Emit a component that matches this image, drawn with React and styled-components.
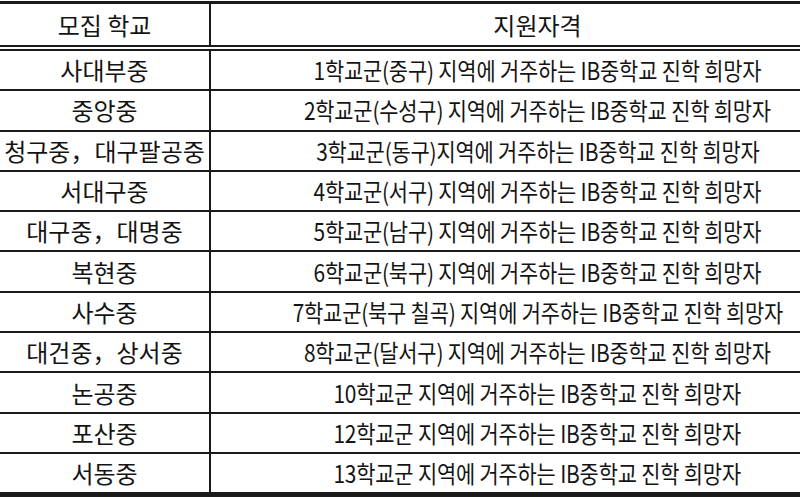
import React from 'react';
import styled, { createGlobalStyle } from 'styled-components';

const GlobalStyle = createGlobalStyle`
	html, body {
		margin: 0;
		padding: 0;
		background: #ffffff;
	}
	body {
		font-family: 'Noto Sans CJK KR', 'Noto Sans', sans-serif;
		color: #141414;
	}
`;

const Table = styled.table`
	width: 800px;
	margin-top: 1px;
	border-collapse: collapse;
	border-top: 3px solid #1a1a1a;
	border-bottom: 5px solid #1a1a1a;
	table-layout: fixed;
`;

const HeadRow = styled.tr`
	border-bottom: 6px double #1a1a1a;
`;

const Row = styled.tr`
	& + & {
		border-top: 2px solid #1a1a1a;
	}
`;

const Cell = styled.td`
	height: ${(props) => (props.head ? '41px' : '38.3px')};
	padding: 0;
	text-align: center;
	vertical-align: middle;
	font-size: 24px;
	font-weight: 400;
	line-height: 1;
	white-space: nowrap;
	overflow: visible;
	&:first-child {
		width: 209px;
		border-right: 2px solid #1a1a1a;
	}
	&:last-child {
		padding-left: 64px;
	}
`;

// condensed face of the right column; negative margins keep long lines centred
const Condensed = styled.span`
	display: inline-block;
	margin: 0 -60px;
	transform: scaleX(0.87);
	transform-origin: center;
	letter-spacing: -0.2px;
`;

const rows = [
	['사대부중', '1학교군(중구) 지역에 거주하는 IB중학교 진학 희망자'],
	['중앙중', '2학교군(수성구) 지역에 거주하는 IB중학교 진학 희망자'],
	['청구중，대구팔공중', '3학교군(동구)지역에 거주하는 IB중학교 진학 희망자'],
	['서대구중', '4학교군(서구) 지역에 거주하는 IB중학교 진학 희망자'],
	['대구중，대명중', '5학교군(남구) 지역에 거주하는 IB중학교 진학 희망자'],
	['복현중', '6학교군(북구) 지역에 거주하는 IB중학교 진학 희망자'],
	['사수중', '7학교군(북구 칠곡) 지역에 거주하는 IB중학교 진학 희망자'],
	['대건중，상서중', '8학교군(달서구) 지역에 거주하는 IB중학교 진학 희망자'],
	['논공중', '10학교군 지역에 거주하는 IB중학교 진학 희망자'],
	['포산중', '12학교군 지역에 거주하는 IB중학교 진학 희망자'],
	['서동중', '13학교군 지역에 거주하는 IB중학교 진학 희망자'],
];

const App = () => {
	return (
		<>
			<GlobalStyle />
			<Table>
				<thead>
					<HeadRow>
						<Cell as='th' head>
							모집 학교
						</Cell>
						<Cell as='th' head>
							지원자격
						</Cell>
					</HeadRow>
				</thead>
				<tbody>
					{rows.map(([school, rule]) => (
						<Row key={school}>
							<Cell>{school}</Cell>
							<Cell>
								<Condensed>{rule}</Condensed>
							</Cell>
						</Row>
					))}
				</tbody>
			</Table>
		</>
	);
};

export default App;
